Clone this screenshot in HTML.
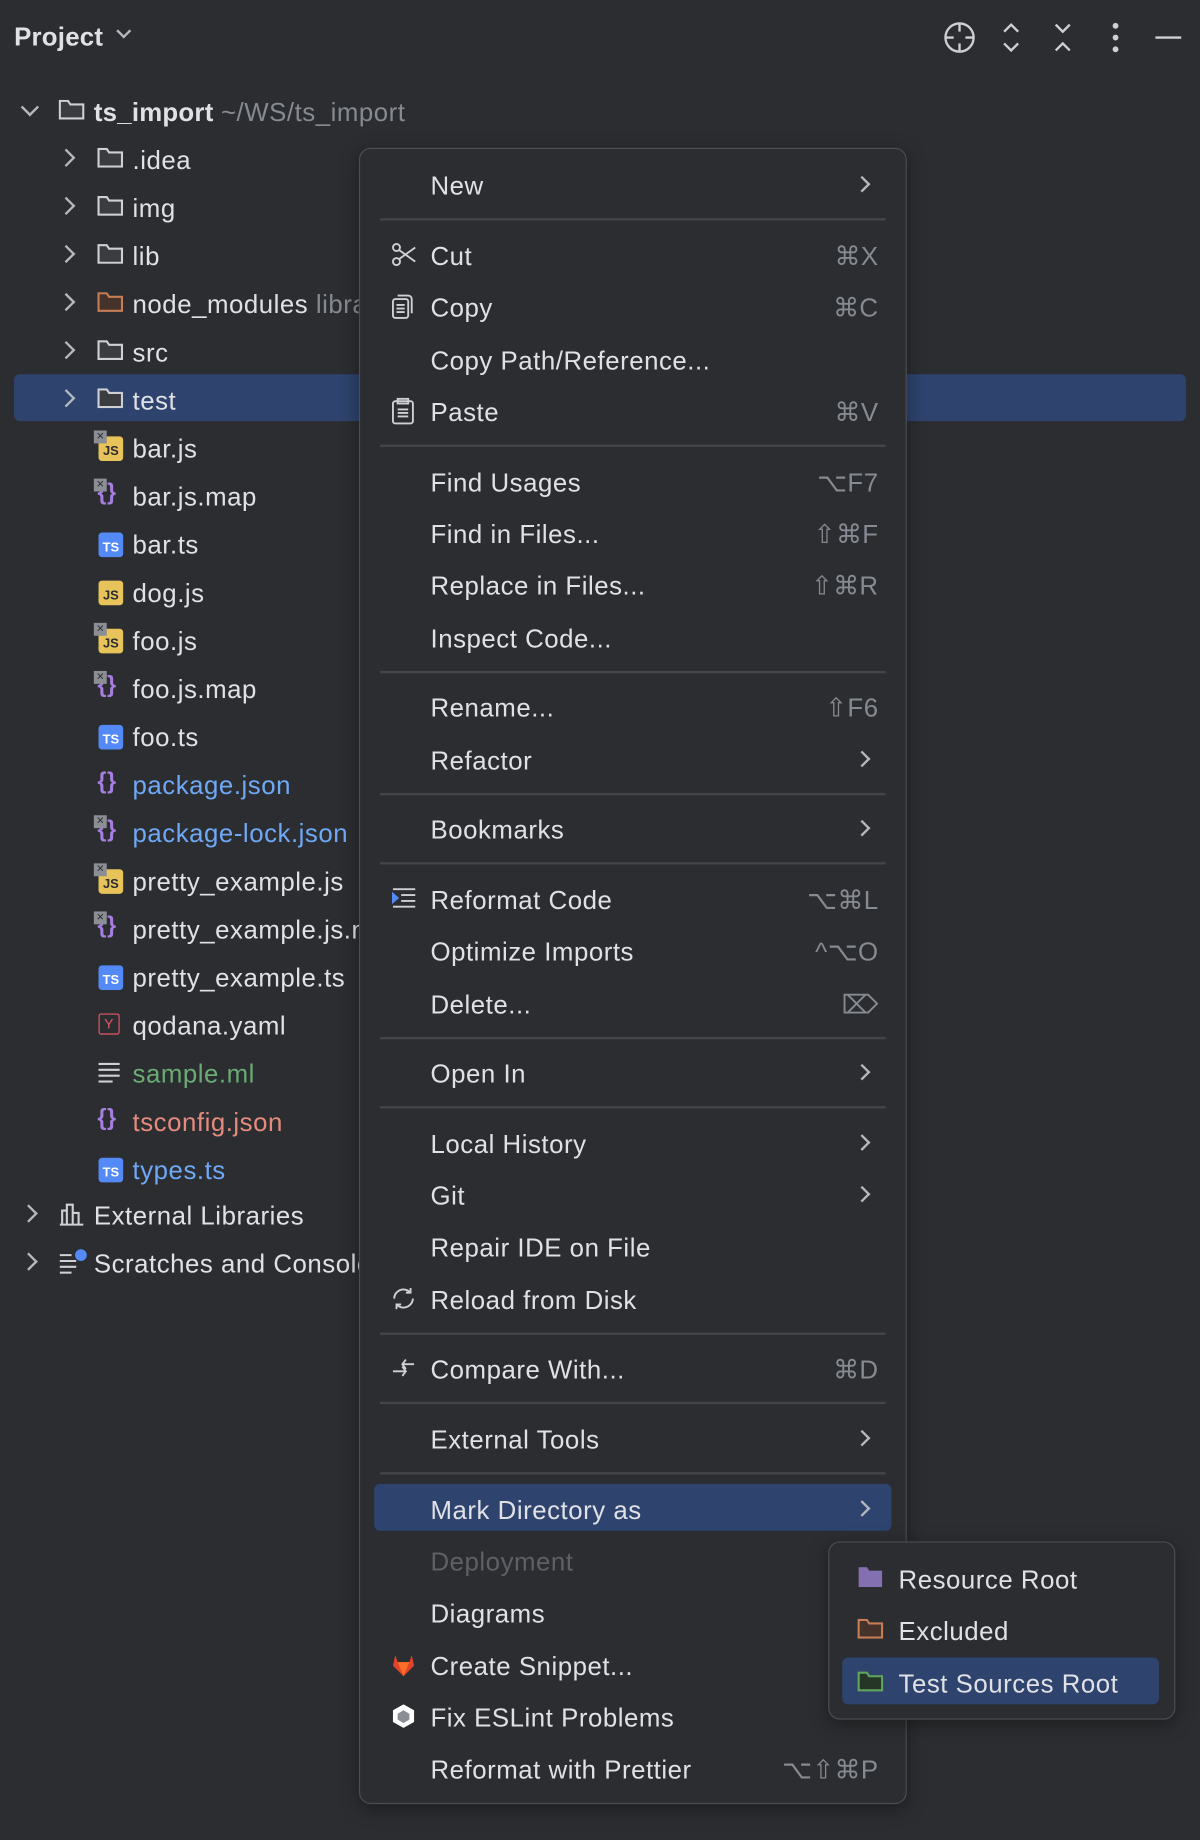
<!DOCTYPE html>
<html><head><meta charset="utf-8"><style>
html,body{margin:0;padding:0;background:#2b2d30;width:1200px;height:1840px;overflow:hidden}
#w{position:absolute;left:0;top:0;width:1023px;height:1568px;transform:scale(1.17302);transform-origin:0 0;font-family:"Liberation Sans",sans-serif;color:#dfe1e5;font-size:22px;letter-spacing:0.45px}
.a{position:absolute;white-space:nowrap;line-height:24px}
.chev{position:absolute;width:9px;height:9px;border-right:2px solid #b4b8bf;border-bottom:2px solid #b4b8bf}
.fold{position:absolute;width:22px;height:17px}
.js{position:absolute;width:21px;height:21px;background:#e8c35a;border-radius:3px;color:#2b2d30;font-size:11px;font-weight:bold;text-align:center;line-height:26px;letter-spacing:0}
.ts{position:absolute;width:21px;height:21px;background:#548af7;border-radius:3px;color:#fff;font-size:11px;font-weight:bold;text-align:center;line-height:26px;letter-spacing:0}
.x{position:absolute;width:11px;height:11px;background:#8b8e94;color:#2b2d30;font-size:11px;line-height:11px;text-align:center;letter-spacing:0}
.br{position:absolute;color:#a67ee0;font-size:20px;font-weight:bold}
.sep{position:absolute;left:324px;width:431px;height:2px;background:#43454a}
.sc{position:absolute;color:#868a91;text-align:right;right:274px;white-space:nowrap;line-height:24px}
.arr{position:absolute;left:730px;width:8px;height:8px;border-right:2px solid #b4b8bf;border-top:2px solid #b4b8bf;transform:rotate(45deg)}
</style></head><body><div id="w">
<div class="a" style="left:12px;top:20px;font-weight:bold;font-size:22px;letter-spacing:0.2px">Project</div>
<div class="chev" style="left:101px;top:22px;width:7px;height:7px;transform:rotate(45deg)"></div>
<svg style="position:absolute;left:800px;top:14px" width="220" height="36" fill="none" stroke="#ced0d6" stroke-width="2">
<circle cx="18" cy="18" r="12"/><path d="M18 6v7M18 23v7M6 18h7M23 18h7"/>
<path d="M56 13l6-6 6 6M56 23l6 6 6-6"/>
<path d="M100 7l6 6 6-6M100 29l6-6 6 6"/>
<circle cx="151" cy="8" r="1.5" fill="#ced0d6"/><circle cx="151" cy="18" r="1.5" fill="#ced0d6"/><circle cx="151" cy="28" r="1.5" fill="#ced0d6"/>
<path d="M185 18h22"/></svg>

<div class="chev" style="left:20px;top:86px;transform:rotate(45deg)"></div>
<svg class="fold" style="left:50px;top:85px" viewBox="0 0 22 17"><path d="M1 1h7l2 3h11v12H1z" fill="#3a3c40" stroke="#ced0d6" stroke-width="1.8"/></svg>
<div class="a" style="left:80px;top:84px;font-weight:bold;letter-spacing:0.2px">ts_import <span style="font-weight:normal;color:#868a91;letter-spacing:0.45px">~/WS/ts_import</span></div>

<div style="position:absolute;left:12px;top:319px;width:999px;height:40px;background:#2e436e;border-radius:5px"></div>

<div id="tree"></div>
<script>
var rows=[["dir",".idea"],["dir","img"],["dir","lib"],["nm","node_modules"],["dir","src"],["dir","test"],["jsx","bar.js"],["mapx","bar.js.map"],["ts","bar.ts"],["js","dog.js"],["jsx","foo.js"],["mapx","foo.js.map"],["ts","foo.ts"],["map","package.json","#6fa8f5"],["mapx","package-lock.json","#6fa8f5"],["jsx","pretty_example.js"],["mapx","pretty_example.js.map"],["ts","pretty_example.ts"],["y","qodana.yaml"],["txt","sample.ml","#6aab73"],["map","tsconfig.json","#e58b7d"],["ts","types.ts","#6fa8f5"]];
var h="";
rows.forEach(function(r,i){var cy=135+41*i,t=cy-10;
if(r[0]=="dir"||r[0]=="nm"){h+='<div class="chev" style="left:51px;top:'+(cy-6)+'px;transform:rotate(-45deg)"></div>';
var c=r[0]=="nm"?"#c77d55":"#ced0d6",f=r[0]=="nm"?"#45322a":"#3a3c40";
h+='<svg class="fold" style="left:83px;top:'+(cy-9)+'px" viewBox="0 0 22 17"><path d="M1 1h7l2 3h11v12H1z" fill="'+f+'" stroke="'+c+'" stroke-width="1.8"/></svg>';}
else if(r[0]=="js"||r[0]=="jsx"){h+='<div class="js" style="left:84px;top:'+(cy-9)+'px">JS</div>';if(r[0]=="jsx")h+='<div class="x" style="left:80px;top:'+(cy-14)+'px">×</div>';}
else if(r[0]=="ts"){h+='<div class="ts" style="left:84px;top:'+(cy-9)+'px">TS</div>';}
else if(r[0]=="map"||r[0]=="mapx"){h+='<div class="br" style="left:83px;top:'+(cy-13)+'px">{}</div>';if(r[0]=="mapx")h+='<div class="x" style="left:80px;top:'+(cy-14)+'px">×</div>';}
else if(r[0]=="y"){h+='<div style="position:absolute;left:84px;top:'+(cy-9)+'px;width:16px;height:16px;border:1.5px solid #e55765;border-radius:2px;color:#e55765;font-size:12px;text-align:center;line-height:17px">Y</div>';}
else if(r[0]=="txt"){h+='<svg style="position:absolute;left:83px;top:'+(cy-9)+'px" width="20" height="18" stroke="#ced0d6" stroke-width="1.8"><path d="M1 2h18M1 7h18M1 12h18M1 17h12"/></svg>';}
h+='<div class="a" style="left:113px;top:'+t+'px;color:'+(r[2]||"#dfe1e5")+'">'+r[1]+(r[0]=="nm"?' <span style="color:#868a91">library root</span>':'')+'</div>';});
var cy=1035;
h+='<div class="chev" style="left:19px;top:'+(cy-6)+'px;transform:rotate(-45deg)"></div><svg style="position:absolute;left:50px;top:'+(cy-10)+'px" width="22" height="20" fill="none" stroke="#ced0d6" stroke-width="1.8"><path d="M1 19h20M3 19V7h4v12M7 19V2h5v17M12 19V9h5v10"/></svg><div class="a" style="left:80px;top:'+(cy-10)+'px">External Libraries</div>';
cy=1076;
h+='<div class="chev" style="left:19px;top:'+(cy-6)+'px;transform:rotate(-45deg)"></div><svg style="position:absolute;left:50px;top:'+(cy-12)+'px" width="26" height="22" fill="none" stroke="#ced0d6" stroke-width="1.8"><path d="M1 6h10M1 11h14M1 16h14M1 21h10"/><circle cx="19" cy="6" r="5" fill="#548af7" stroke="none"/></svg><div class="a" style="left:80px;top:'+(cy-10)+'px">Scratches and Consoles</div>';
document.getElementById("tree").innerHTML=h;
</script>

<div style="position:absolute;left:306px;top:126px;width:465px;height:1410px;background:#2b2d30;border:1px solid #4a4d52;border-radius:10px;box-shadow:0 4px 16px rgba(0,0,0,.35)"></div>
<div style="position:absolute;left:319px;top:1265px;width:441px;height:40px;background:#2e436e;border-radius:5px"></div>
<div id="menu"></div>
<script>
var it=[["New",157,"",1],["Cut",217,"⌘X",0,"cut"],["Copy",261,"⌘C",0,"copy"],["Copy Path/Reference...",306,""],["Paste",350,"⌘V",0,"paste"],["Find Usages",410,"⌥F7"],["Find in Files...",454,"⇧⌘F"],["Replace in Files...",498,"⇧⌘R"],["Inspect Code...",543,""],["Rename...",602,"⇧F6"],["Refactor",647,"",1],["Bookmarks",706,"",1],["Reformat Code",766,"⌥⌘L",0,"ref"],["Optimize Imports",810,"^⌥O"],["Delete...",855,"⌦"],["Open In",914,"",1],["Local History",974,"",1],["Git",1018,"",1],["Repair IDE on File",1062,""],["Reload from Disk",1107,"",0,"reload"],["Compare With...",1166,"⌘D",0,"cmp"],["External Tools",1226,"",1],["Mark Directory as",1286,"",1],["Deployment",1330,"",0,"",1],["Diagrams",1374,""],["Create Snippet...",1419,"",0,"gl"],["Fix ESLint Problems",1463,"",0,"es"],["Reformat with Prettier",1507,"⌥⇧⌘P"]];
var ic={cut:'<circle cx="5" cy="5" r="3"/><circle cx="5" cy="17" r="3"/><path d="M7 7l14 10M7 15l14-10"/>',
copy:'<rect x="2" y="5" width="13" height="16" rx="2"/><path d="M6 2h9a3 3 0 0 1 3 3v12M5 10h7M5 13h7M5 16h7"/>',
paste:'<rect x="2" y="3" width="17" height="19" rx="2"/><rect x="6" y="1" width="9" height="4"/><path d="M6 10h9M6 13h9M6 16h9"/>',
ref:'<path d="M2 3h19M9 8h12M9 13h12M2 18h19"/><path d="M2 7l4 3.5-4 3.5z" fill="#548af7" stroke="#548af7"/>',
reload:'<path d="M3 11a8 8 0 0 1 14-5M19 11a8 8 0 0 1-14 5"/><path d="M17 2v4h-4M5 20v-4h4"/>',
cmp:'<path d="M2 14h11M10 10l3 4-3 4M20 8H10M13 4l-3 4 3 4"/>',
gl:'<path d="M11 21L2 12l2-9 2 6h10l2-6 2 9z" fill="#e2432a" stroke="none"/><path d="M11 21L6 9h10z" fill="#fc6d26" stroke="none"/>',
es:'<path d="M11 1l9 5v10l-9 5-9-5V6z" fill="#fff" stroke="none"/><path d="M11 6l5 3v5l-5 3-5-3V9z" fill="#8b8e94" stroke="none"/>'};
var m="";
it.forEach(function(a){var t=a[1]-10;
m+='<div class="a" style="left:367px;top:'+t+'px;color:'+(a[5]?'#5e6066':'#dfe1e5')+'">'+a[0]+'</div>';
if(a[2])m+='<div class="sc" style="top:'+t+'px">'+a[2]+'</div>';
if(a[3])m+='<div class="arr" style="top:'+(a[1]-5)+'px"></div>';
if(a[4])m+='<svg style="position:absolute;left:333px;top:'+(a[1]-11)+'px" width="24" height="24" fill="none" stroke="#ced0d6" stroke-width="1.6">'+ic[a[4]]+'</svg>';});
[186,379,572,676,735,884,943,1136,1195,1255].forEach(function(y){m+='<div class="sep" style="top:'+y+'px"></div>';});
document.getElementById("menu").innerHTML=m;
</script>

<div style="position:absolute;left:706px;top:1314px;width:294px;height:150px;background:#2b2d30;border:1px solid #4a4d52;border-radius:10px;box-shadow:0 4px 16px rgba(0,0,0,.35)"></div>
<div style="position:absolute;left:718px;top:1413px;width:270px;height:40px;background:#2e436e;border-radius:5px"></div>
<svg class="fold" style="left:731px;top:1336px" viewBox="0 0 22 17"><path d="M1 0h7l2 3h11v14H1z" fill="#8370b0"/></svg>
<div class="a" style="left:766px;top:1335px">Resource Root</div>
<svg class="fold" style="left:731px;top:1380px" viewBox="0 0 22 17"><path d="M1 1h7l2 3h11v12H1z" fill="#45322a" stroke="#c77d55" stroke-width="1.8"/></svg>
<div class="a" style="left:766px;top:1379px">Excluded</div>
<svg class="fold" style="left:731px;top:1425px" viewBox="0 0 22 17"><path d="M1 1h7l2 3h11v12H1z" fill="#253627" stroke="#5fa65f" stroke-width="1.8"/></svg>
<div class="a" style="left:766px;top:1424px">Test Sources Root</div>
</div></body></html>
